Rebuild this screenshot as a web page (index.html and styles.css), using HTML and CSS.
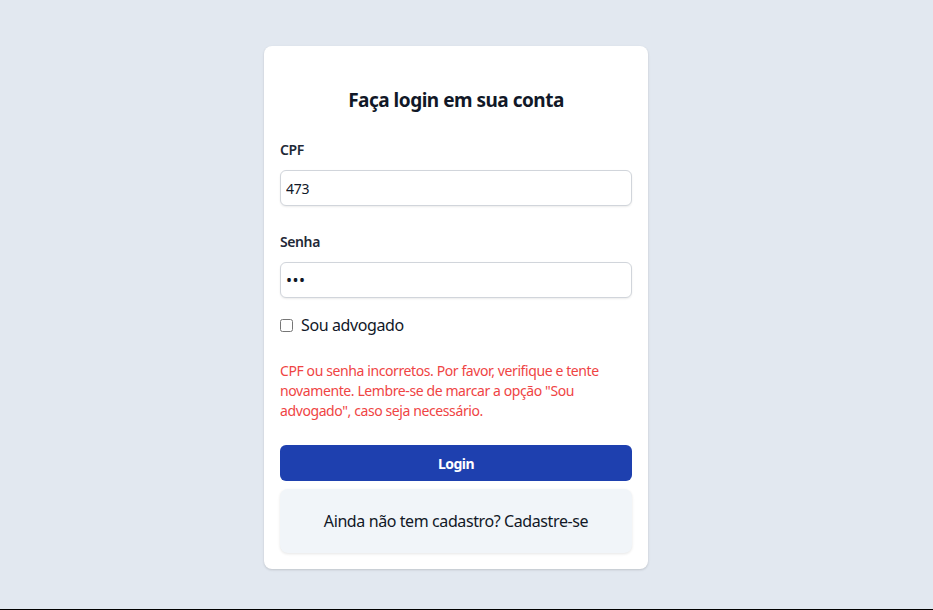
FILE: index.html
```html
<!DOCTYPE html>
<html lang="pt-BR">
<head>
<meta charset="utf-8">
<title>Login</title>
<link rel="stylesheet" href="styles.css">
</head>
<body>
<main class="page">
  <div class="card">
    <h1 class="title">Faça login em sua conta</h1>
    <form class="form">
      <label class="label" for="cpf">CPF</label>
      <input class="input" id="cpf" type="text" value="473">
      <label class="label label-gap" for="senha">Senha</label>
      <input class="input input-pass" id="senha" type="password" value="123">
      <label class="check">
        <input type="checkbox" class="check-box">
        <span>Sou advogado</span>
      </label>
      <p class="error">CPF ou senha incorretos. Por favor, verifique e tente novamente. Lembre-se de marcar a opção "Sou advogado", caso seja necessário.</p>
      <button type="button" class="btn">Login</button>
    </form>
    <div class="signup">Ainda não tem cadastro? Cadastre-se</div>
  </div>
</main>
<div class="bottom-line"></div>
</body>
</html>
```

FILE: styles.css
```css
* { box-sizing: border-box; }
html, body { margin: 0; padding: 0; }
body {
  background: #e2e8f0;
  font-family: "Segoe UI", "Noto Sans", "Open Sans", sans-serif;
  color: #111827;
  height: 610px;
  overflow: hidden;
}
.page {
  width: 912px;
  height: 609px;
  display: flex;
  justify-content: center;
  align-items: flex-start;
  padding-top: 46px;
}
.card {
  width: 384px;
  background: #ffffff;
  border-radius: 8px;
  padding: 16px;
  box-shadow: 0 1px 3px rgba(0,0,0,0.1), 0 1px 2px rgba(0,0,0,0.06);
}
.title {
  margin: 24px 0 0;
  font-size: 19px;
  line-height: 28px;
  font-weight: 700;
  letter-spacing: -0.5px;
  text-align: center;
  color: #111827;
}
.form {
  display: flex;
  flex-direction: column;
  margin-top: 26px;
}
.label {
  font-size: 14px;
  line-height: 20px;
  font-weight: 600;
  letter-spacing: -0.4px;
  color: #1f2937;
}
.label-gap { margin-top: 26px; }
.input {
  margin-top: 10px;
  height: 36px;
  width: 100%;
  border: 1px solid #d1d5db;
  border-radius: 6px;
  padding: 0 5px;
  font-family: inherit;
  font-size: 14px;
  letter-spacing: -0.3px;
  color: #111827;
  box-shadow: 0 1px 2px rgba(0,0,0,0.08);
  background: #fff;
  outline: none;
}
.input-pass { font-size: 16px; letter-spacing: 0.5px; }
.check {
  margin-top: 15px;
  display: flex;
  align-items: center;
  gap: 8px;
  font-size: 16px;
  line-height: 24px;
  letter-spacing: -0.4px;
  color: #111827;
}
.check-box {
  margin: 0;
  width: 13px;
  height: 13px;
}
.error {
  margin: 24px 0 0;
  font-size: 14px;
  line-height: 20px;
  letter-spacing: -0.4px;
  color: #ef4444;
}
.btn {
  margin-top: 24px;
  height: 36px;
  width: 100%;
  border: none;
  border-radius: 6px;
  background: #1e40af;
  color: #fff;
  font-family: inherit;
  font-size: 14px;
  font-weight: 700;
  letter-spacing: -0.5px;
}
.signup {
  margin-top: 8px;
  height: 64px;
  background: #f1f5f9;
  border-radius: 8px;
  display: flex;
  align-items: center;
  justify-content: center;
  font-size: 16px;
  letter-spacing: -0.4px;
  color: #111827;
  box-shadow: 0 1px 3px rgba(0,0,0,0.1);
}
.bottom-line {
  height: 1px;
  background: #000;
}
```
